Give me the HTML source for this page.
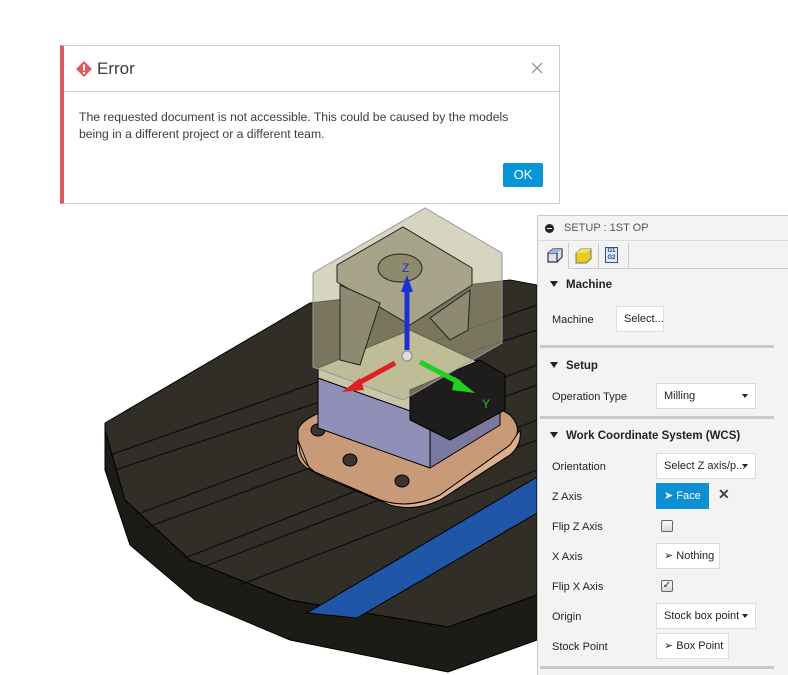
<!DOCTYPE html>
<html><head><meta charset="utf-8"><style>
*{box-sizing:border-box;margin:0;padding:0}
body{width:788px;height:675px;background:#fff;position:relative;overflow:hidden;font-family:"Liberation Sans",sans-serif}
#dlg{position:absolute;left:60px;top:45px;width:500px;height:159px;background:#fff;border:1px solid #ccc;border-left:4px solid #e05a5f}
#dlg .hd{height:46px;border-bottom:1px solid #d0d0d0;position:relative}
#dlg .ttl{position:absolute;left:33px;top:13px;font-size:17px;color:#3c3c3c}
#dlg .x{position:absolute;right:16px;top:12px;font-size:18px;color:#999;font-weight:normal}
#dlg .bd{position:absolute;left:15px;top:63px;font-size:12.2px;line-height:17px;color:#3c3c3c;width:452px}
#dlg .ok{position:absolute;left:439px;top:117px;width:40px;height:24px;background:#0696d7;color:#fff;font-size:13px;text-align:center;line-height:24px;border-radius:2px}
#pn{position:absolute;left:537px;top:215px;width:251px;height:460px;background:#f3f3f3;border-left:1px solid #c8c8c8;border-top:1px solid #c8c8c8;font-size:11px;color:#222}
.row{position:absolute;left:14px}
.sec{position:absolute;left:12px;font-weight:bold;font-size:11.5px;color:#222}
.sep{position:absolute;left:2px;width:234px;height:3px;background:#c9c9c9}
.btn{position:absolute;background:#fff;border:1px solid #ddd;height:26px;line-height:24px;padding-left:7px;font-size:11px}
.tri{display:inline-block;width:0;height:0;border-left:4px solid transparent;border-right:4px solid transparent;border-top:6px solid #222;margin-right:8px;vertical-align:1px}
.dd{position:absolute;right:7px;top:10px;border-left:3px solid transparent;border-right:3px solid transparent;border-top:4px solid #222}
.cb{position:absolute;left:123px;width:12px;height:12px;border:1px solid #666;border-radius:2px;background:linear-gradient(#fafafa,#d8d8d8)}
</style></head><body>
<svg width="788" height="675" style="position:absolute;left:0;top:0">
<polygon points="105,430 105,470 130,545 195,600 290,640 448,672 537,640 537,595 448,627 290,600 190,560 125,500" fill="#1c1b16" stroke="#000"/>
<polygon points="105,423 310,303 510,280 537,285 537,595 448,627 290,600 190,560 125,500 105,430" fill="#302e26" stroke="#000"/>
<g stroke="#0e0e0b" stroke-width="1.2">
<line x1="110" y1="455" x2="537" y2="305"/>
<line x1="115" y1="470" x2="537" y2="330"/>
<line x1="135" y1="515" x2="537" y2="365"/>
<line x1="145" y1="528" x2="537" y2="385"/>
<line x1="185" y1="558" x2="537" y2="420"/>
<line x1="200" y1="568" x2="537" y2="440"/>
<line x1="240" y1="585" x2="537" y2="470"/>
</g>
<polygon points="307,613 537,477 537,513 357,618" fill="#1f56a8" stroke="#000"/>
<path d="M298,430 Q300,420 330,408 L415,380 Q440,372 470,390 L510,415 Q525,430 510,445 L440,495 Q410,510 380,500 L310,470 Q292,460 298,440Z" fill="#c89a78" stroke="#000"/>
<path d="M298,440 L300,452 Q305,470 330,480 L390,505 Q415,512 440,500 L510,455 Q522,445 520,430 L510,445 L440,495 Q410,510 380,500 L310,470Z" fill="#dcb08c" stroke="#000"/>
<g fill="#3a3530" stroke="#000"><ellipse cx="318" cy="430" rx="7" ry="6"/><ellipse cx="350" cy="460" rx="7" ry="6"/><ellipse cx="402" cy="481" rx="7" ry="6"/></g>
<polygon points="318,378 430,418 430,468 318,428" fill="#8f8fb7" stroke="#000"/>
<polygon points="430,418 500,380 500,425 430,468" fill="#7a7aa0" stroke="#000"/>
<polygon points="318,368 410,330 500,372 430,418 318,378" fill="#c9c7a8" stroke="#000"/>
<polygon points="410,390 480,360 505,375 505,410 450,440 410,420" fill="#1e1d1b" stroke="#000"/>
<polygon points="313,273 425,208 502,253 502,343 403,400 313,367" fill="#b6b28a" fill-opacity="0.55" stroke="#999"/>
<polygon points="337,265 403,227 472,268 472,285 410,325 337,282" fill="#a8a48a" stroke="#222"/>
<polygon points="340,285 380,303 360,365 340,360" fill="#8e8a72" stroke="#222"/>
<polygon points="430,318 470,290 468,330 450,340" fill="#8e8a72" stroke="#222"/>
<ellipse cx="400" cy="268" rx="22" ry="14" fill="#8e8a6e" stroke="#222"/>
<line x1="407" y1="350" x2="407" y2="290" stroke="#1c2fd6" stroke-width="5"/>
<polygon points="401,292 407,275 413,292" fill="#1c2fd6"/>
<text x="402" y="272" fill="#1c2fd6" font-size="12" font-family="Liberation Sans">Z</text>
<line x1="395" y1="363" x2="355" y2="385" stroke="#e02020" stroke-width="5"/>
<polygon points="360,378 342,392 364,390" fill="#e02020"/>
<line x1="420" y1="362" x2="460" y2="383" stroke="#20d020" stroke-width="5"/>
<polygon points="455,377 475,393 452,390" fill="#20d020"/>
<text x="482" y="408" fill="#20c020" font-size="12" font-family="Liberation Sans">Y</text>
<circle cx="407" cy="356" r="5" fill="#ddd" stroke="#888"/>
</svg>
<div id="dlg"><div class="hd">
<svg style="position:absolute;left:12px;top:15px" width="16" height="16"><polygon points="8,0 16,8 8,16 0,8" fill="#e05a5f"/><rect x="7" y="3.5" width="2" height="6" fill="#fff"/><rect x="7" y="11" width="2" height="2" fill="#fff"/></svg>
<div class="ttl">Error</div>
<svg style="position:absolute;right:16px;top:16px" width="12" height="12"><path d="M1,1 L11,11 M11,1 L1,11" stroke="#888" stroke-width="1.2"/></svg></div>
<div class="bd">The requested document is not accessible. This could be caused by the models being in a different project or a different team.</div>
<div class="ok">OK</div></div>
<div id="pn">
<div style="position:absolute;left:0;top:0;width:251px;height:25px;border-bottom:1px solid #ddd"></div>
<div style="position:absolute;left:7px;top:8px;width:9px;height:9px;border-radius:50%;background:#222"><div style="position:absolute;left:2px;top:4px;width:5px;height:1px;background:#fff"></div></div>
<div style="position:absolute;left:26px;top:6px;color:#555;font-size:11px">SETUP : 1ST OP</div>
<div style="position:absolute;left:0;top:52px;width:251px;height:1px;background:#ccc"></div>
<div style="position:absolute;left:1px;top:27px;width:30px;height:26px;background:#f3f3f3;border-right:1px solid #ccc;border-bottom:1px solid #f3f3f3"></div>
<div style="position:absolute;left:60px;top:27px;width:1px;height:25px;background:#ccc"></div>
<div style="position:absolute;left:90px;top:27px;width:1px;height:25px;background:#ccc"></div>
<svg style="position:absolute;left:7px;top:30px" width="20" height="20"><polygon points="3,7 8,3 17,3 17,11 12,16 3,16" fill="#dde4f0" stroke="#334" stroke-width="1.2"/><polyline points="3,7 12,7 12,16 M12,7 17,3" fill="none" stroke="#334" stroke-width="1.2"/><polygon points="8,3 17,3 12,7 3,7" fill="#8fb8e8"/></svg>
<svg style="position:absolute;left:36px;top:30px" width="20" height="20"><polygon points="2,7 7,3 17,3 17,13 12,17 2,17" fill="#e8cc20" stroke="#776" stroke-width="1"/><polygon points="2,7 7,3 17,3 12,7" fill="#f4e060"/></svg>
<div style="position:absolute;left:67px;top:31px;width:13px;height:16px;border:1px solid #357;background:#dbe9f8;font-size:6px;line-height:7px;color:#247;text-align:center;font-weight:bold">G1<br>G2</div>
<div class="sec" style="top:63px"><span class="tri"></span>Machine</div>
<div class="row" style="top:98px">Machine</div>
<div class="btn" style="left:78px;top:90px;width:48px">Select...</div>
<div class="sep" style="top:129px"></div>
<div class="sec" style="top:144px"><span class="tri"></span>Setup</div>
<div class="row" style="top:175px">Operation Type</div>
<div class="btn" style="left:118px;top:167px;width:100px">Milling<span class="dd"></span></div>
<div class="sep" style="top:200px"></div>
<div class="sec" style="top:214px"><span class="tri"></span>Work Coordinate System (WCS)</div>
<div class="row" style="top:245px">Orientation</div>
<div class="btn" style="left:118px;top:237px;width:100px">Select Z axis/p...<span class="dd"></span></div>
<div class="row" style="top:275px">Z Axis</div>
<div class="btn" style="left:118px;top:267px;width:53px;background:#0c8fd3;border-color:#0c8fd3;color:#fff">➤ Face</div>
<div style="position:absolute;left:180px;top:270px;font-size:14px;font-weight:bold;color:#444">✕</div>
<div class="row" style="top:305px">Flip Z Axis</div>
<div class="cb" style="top:304px"></div>
<div class="row" style="top:335px">X Axis</div>
<div class="btn" style="left:118px;top:327px;width:64px">➢ Nothing</div>
<div class="row" style="top:365px">Flip X Axis</div>
<div class="cb" style="top:364px;font-size:10px;line-height:10px;text-align:center">✓</div>
<div class="row" style="top:395px">Origin</div>
<div class="btn" style="left:118px;top:387px;width:100px">Stock box point<span class="dd"></span></div>
<div class="row" style="top:425px">Stock Point</div>
<div class="btn" style="left:118px;top:417px;width:73px">➢ Box Point</div>
<div class="sep" style="top:450px"></div>
</div>
</body></html>
